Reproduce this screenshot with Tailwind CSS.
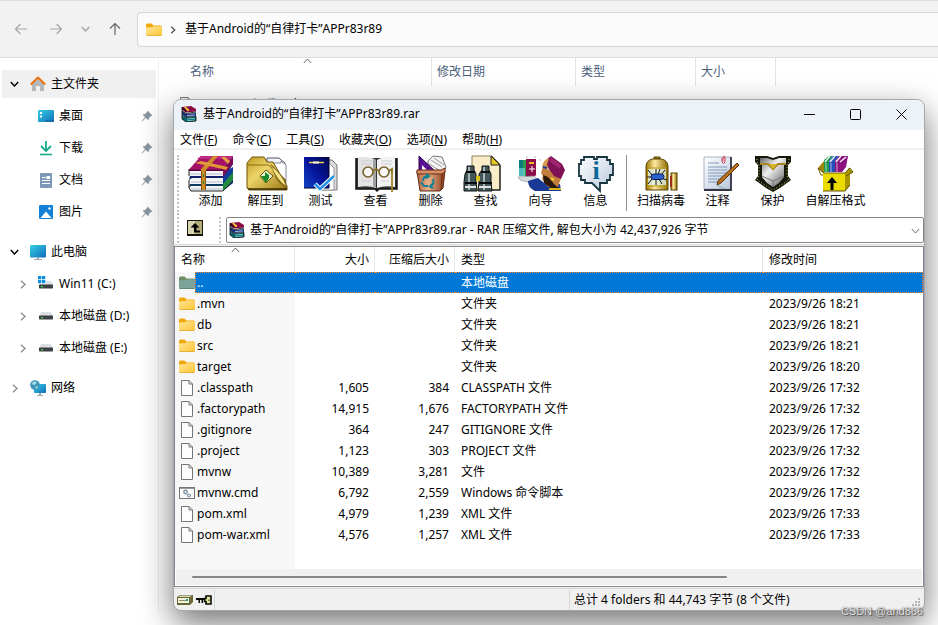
<!doctype html>
<html lang="zh-CN">
	<head>
		<meta charset="UTF-8" />
		<meta name="viewport" content="width=device-width, initial-scale=1.0" />
		<title>基于Android的“自律打卡”APPr83r89.rar</title>
		<script src="https://cdn.jsdelivr.net/npm/@tailwindcss/browser@4"></script>
	</head>
	<body
		class="relative min-h-screen overflow-hidden bg-white text-black text-xs leading-4 font-['Noto_Sans','Noto_Sans_CJK_SC',sans-serif]"
	>
		<!-- Shared icons (zero-sized rather than hidden, so the gradients still resolve) -->
		<svg class="absolute h-0 w-0" aria-hidden="true">
			<defs>
				<linearGradient id="gFolder" x1="0" y1="0" x2="1" y2="1">
					<stop offset="0" stop-color="#ffe596" /><stop offset="1" stop-color="#fdc536" />
				</linearGradient>
				<linearGradient id="gBlue" x1="0" y1="0" x2="1" y2="1">
					<stop offset="0" stop-color="#35d0e0" /><stop offset="1" stop-color="#0f6cbd" />
				</linearGradient>
				<linearGradient id="gGold" x1="0" y1="0" x2="1" y2="0">
					<stop offset="0" stop-color="#9a7400" /><stop offset=".4" stop-color="#ffe9a0" /><stop offset="1" stop-color="#8a6a00" />
				</linearGradient>
				<linearGradient id="gGoldD" x1="0" y1="0" x2="1" y2="1">
					<stop offset="0" stop-color="#c09a22" /><stop offset=".4" stop-color="#ecd56a" /><stop offset="1" stop-color="#9a7614" />
				</linearGradient>
				<linearGradient id="gNavy" x1="0" y1="1" x2="1" y2="0">
					<stop offset="0" stop-color="#1246c8" /><stop offset=".5" stop-color="#06149a" /><stop offset="1" stop-color="#02084e" />
				</linearGradient>
				<linearGradient id="gSteel" x1="0" y1="0" x2="1" y2="1">
					<stop offset="0" stop-color="#666" /><stop offset=".4" stop-color="#f0f0f0" /><stop offset="1" stop-color="#555" />
				</linearGradient>
				<linearGradient id="gPage" x1="0" y1="0" x2="1" y2="1">
					<stop offset="0" stop-color="#ffffff" /><stop offset="1" stop-color="#b9c8dc" />
				</linearGradient>
				<linearGradient id="gBin" x1="0" y1="0" x2="1" y2="0">
					<stop offset="0" stop-color="#b5623a" /><stop offset=".4" stop-color="#e9b08c" /><stop offset="1" stop-color="#8c3f1c" />
				</linearGradient>
			</defs>
			<symbol id="folder" viewBox="0 0 16 13">
				<path d="M0 2Q0 .5 1.500 .5H5.500L7.500 2.500H14.500Q16 2.500 16 4V7H0Z" fill="#f2a70a" />
				<path d="M0 5Q0 4.200 1 4.200H6L7.500 3.200H15Q16 3.200 16 4.200V11.500Q16 12.800 14.700 12.800H1.300Q0 12.800 0 11.500Z" fill="url(#gFolder)" />
				<path d="M.5 12.500H15.500" stroke="#e9b23c" />
			</symbol>
			<symbol id="folderSel" viewBox="0 0 16 13">
				<path d="M0 2Q0 .5 1.500 .5H5.500L7.500 2.500H14.500Q16 2.500 16 4V7H0Z" fill="#6d8f62" />
				<path d="M0 5Q0 4.200 1 4.200H6L7.500 3.200H15Q16 3.200 16 4.200V11.500Q16 12.800 14.700 12.800H1.300Q0 12.800 0 11.500Z" fill="#7da39b" />
				<path d="M.5 12.500H15.500" stroke="#5f8a6e" />
			</symbol>
			<symbol id="file" viewBox="0 0 12 16">
				<path d="M.5 .5H8L11.500 4V15.500H.5Z" fill="#fdfdfd" stroke="#757575" />
				<path d="M8 .5V4H11.500" fill="none" stroke="#757575" />
			</symbol>
			<symbol id="cmd" viewBox="0 0 16 12">
				<rect x=".5" y=".5" width="15" height="11" fill="#fafafa" stroke="#757575" />
				<path d="M1 1.500H15" stroke="#9a9a9a" />
				<circle cx="6.500" cy="5" r="1.700" fill="none" stroke="#8194a5" stroke-width="1.400" />
				<circle cx="10" cy="8.500" r="1.500" fill="none" stroke="#8194a5" stroke-width="1.200" />
			</symbol>
			<symbol id="pin" viewBox="0 0 12 12">
				<path d="M6.500 .5 11.500 5.500 10 6 8 8 7.500 10.500 4.800 7.900 1 11.500 .5 11 4.100 7.200 1.500 4.500 4 4 6 2Z" fill="#8b979f" />
			</symbol>
			<symbol id="drive" viewBox="0 0 16 8">
				<path d="M3 0H13L15 4H1Z" fill="#dcdfe3" />
				<rect x="1" y="3.500" width="14" height="4" rx=".7" fill="#3c4043" />
				<rect x="3" y="5" width="2" height="1.300" fill="#3cd65c" />
			</symbol>
			<symbol id="books" viewBox="0 0 16 16">
				<path d="M1 1 10 0 15 3V5.500L5 6.500 1 3.500Z" fill="#8d0a45" />
				<path d="M1 1 5 4V6.500L1 3.500Z" fill="#3d0020" />
				<path d="M6 7.300 15 6.500" stroke="#eee" />
				<path d="M1 5 5 8 15 7V10L5 11 1 8.500Z" fill="#17327c" />
				<path d="M6 9.600 14 8.900" stroke="#c8d4f0" stroke-width=".8" />
				<path d="M1 9.500 5 11.800 15 10.800V15L5 16 1 13Z" fill="#07646c" />
				<path d="M6 13 14 12.200M6 14.800 14 14" stroke="#7fe0d8" stroke-width=".8" />
				<path d="M3 1H5L8 3.500V5H6.500Z" fill="#f0d030" />
				<path d="M1 1V13L5 16 15 15V10.500L5 11.500 1 8.800M1 5 5 7.500 15 6" fill="none" stroke="#0a0a0a" stroke-width=".8" />
			</symbol>
			<symbol id="chevR" viewBox="0 0 6 9">
				<path d="M1 .8 5 4.500 1 8.200" fill="none" stroke="currentColor" stroke-width="1.300" />
			</symbol>
			<symbol id="chevD" viewBox="0 0 9 6">
				<path d="M.8 1 4.500 5 8.200 1" fill="none" stroke="currentColor" stroke-width="1.400" />
			</symbol>
			<symbol id="chevThin" viewBox="0 0 9 6">
				<path d="M.8 1 4.500 5 8.200 1" fill="none" stroke="currentColor" />
			</symbol>
		</svg>

		<!-- Explorer toolbar -->
		<header
			class="flex h-[58px] items-center border-y border-[#dedede] bg-[#f2f2f2] pl-3.5"
		>
			<button class="flex w-[35px]" aria-label="后退">
				<svg class="h-3 w-3.5" viewBox="0 0 14 12" fill="none" stroke="#a5a5a5" stroke-width="1.200"><path d="M6.500 1 1.500 6 6.500 11M1.500 6H13" /></svg>
			</button>
			<button class="flex w-[32px]" aria-label="前进">
				<svg class="h-3 w-3.5" viewBox="0 0 14 12" fill="none" stroke="#a5a5a5" stroke-width="1.200"><path d="M7.500 1 12.500 6 7.500 11M12.500 6H1" /></svg>
			</button>
			<button class="flex w-[28px] text-[#a5a5a5]" aria-label="最近">
				<svg class="h-1.5 w-[9px]"><use href="#chevD" /></svg>
			</button>
			<button class="flex w-[28px]" aria-label="向上">
				<svg class="h-3.5 w-3" viewBox="0 0 12 14" fill="none" stroke="#666" stroke-width="1.200"><path d="M1 6.500 6 1.500 11 6.500M6 1.500V13" /></svg>
			</button>
			<nav
				class="flex h-[35px] flex-1 items-center rounded-l border border-r-0 border-[#d6d6d6] bg-[#fbfbfb] pl-2"
			>
				<svg class="mr-2 h-[13px] w-4"><use href="#folder" /></svg>
				<svg class="mt-0.5 mr-[9px] h-2 w-1.5 text-[#444]"><use href="#chevR" /></svg>
				<a href="#">基于Android的“自律打卡”APPr83r89</a>
			</nav>
		</header>

		<div class="flex">
			<!-- Navigation pane -->
			<aside class="w-[159px] shrink-0 border-r border-[#f0f0f0] pt-2.5 pb-52">
				<ul>
					<li class="mx-0.5 my-0.5 flex h-7 items-center bg-[#f0f0f0] pl-2">
						<svg class="h-1.5 w-[9px]"><use href="#chevD" /></svg>
						<svg class="mr-[5px] ml-[11px] h-4 w-4" viewBox="0 0 16 16">
							<path d="M2 8 8 3 14 8V15H10V10H6V15H2Z" fill="#b5b8bb" />
							<path d="M.8 8.500 8 1.500 15.200 8.500" fill="none" stroke="#e8730c" stroke-width="2" stroke-linejoin="round" />
						</svg>
						<span>主文件夹</span>
					</li>
					<li class="flex h-8 items-center pr-[5px] pl-[38px]">
						<svg class="mr-[5px] h-4 w-4" viewBox="0 0 16 16">
							<rect y="2" width="16" height="12" rx="1" fill="url(#gBlue)" />
							<path d="M2 4H4V6H2ZM2 7.500H4V9.500H2Z" fill="#fff" />
							<path d="M8 13H16" stroke="#0a4f94" stroke-dasharray="2 1" />
						</svg>
						<span class="flex-1">桌面</span>
						<svg class="h-3 w-3"><use href="#pin" /></svg>
					</li>
					<li class="flex h-8 items-center pr-[5px] pl-[38px]">
						<svg class="mr-[5px] h-4 w-4" viewBox="0 0 16 16">
							<path d="M8 1V10.500M3 6 8 11 13 6" fill="none" stroke="#17a98c" stroke-width="1.800" />
							<path d="M2 14.500H14" stroke="#17a98c" stroke-width="1.600" />
						</svg>
						<span class="flex-1">下载</span>
						<svg class="h-3 w-3"><use href="#pin" /></svg>
					</li>
					<li class="flex h-8 items-center pr-[5px] pl-[38px]">
						<svg class="mr-[5px] h-4 w-4" viewBox="0 0 16 16">
							<rect x="2" y="1" width="12" height="15" rx="1" fill="#7e98b8" />
							<path d="M4 5.500H7.500M4 8.500H12M4 11.500H12" stroke="#fff" stroke-width="1.200" />
							<rect x="8.500" y="4" width="3.500" height="3" fill="#fff" />
						</svg>
						<span class="flex-1">文档</span>
						<svg class="h-3 w-3"><use href="#pin" /></svg>
					</li>
					<li class="flex h-8 items-center pr-[5px] pl-[38px]">
						<svg class="mr-[5px] h-4 w-4" viewBox="0 0 16 16">
							<rect x="1" y="1" width="14" height="14" rx="1" fill="#1481d6" />
							<path d="M2.500 14 8 7.500 13.500 14Z" fill="#fff" />
							<circle cx="11.500" cy="4.500" r="1.200" fill="#fff" />
						</svg>
						<span class="flex-1">图片</span>
						<svg class="h-3 w-3"><use href="#pin" /></svg>
					</li>
					<li class="mt-2 flex h-8 items-center pl-2.5">
						<svg class="h-1.5 w-[9px]"><use href="#chevD" /></svg>
						<svg class="mr-[5px] ml-[11px] h-4 w-4" viewBox="0 0 16 16">
							<rect y="1" width="16" height="12.500" rx="1" fill="url(#gBlue)" />
							<path d="M7 13H9V15H12V16H4V15H7Z" fill="#9aa5ad" />
						</svg>
						<span>此电脑</span>
					</li>
					<li class="flex h-8 items-center pl-5">
						<svg class="h-[9px] w-1.5 text-[#888]"><use href="#chevR" /></svg>
						<svg class="mr-[5px] ml-3 h-4 w-4" viewBox="0 0 16 16">
							<path d="M0 0H3.300V3.300H0ZM4 0H7.300V3.300H4ZM0 4H3.300V7.300H0ZM4 4H7.300V7.300H4Z" fill="#0a8fe0" />
							<path d="M8 5H13L15 9H1L2 8H8Z" fill="#dcdfe3" />
							<rect x="1" y="8.500" width="14" height="4" rx=".7" fill="#3c4043" />
							<rect x="3" y="10" width="2" height="1.300" fill="#3cd65c" />
						</svg>
						<span>Win11 (C:)</span>
					</li>
					<li class="flex h-8 items-center pl-5">
						<svg class="h-[9px] w-1.5 text-[#888]"><use href="#chevR" /></svg>
						<svg class="mr-[5px] ml-3 h-2 w-4"><use href="#drive" /></svg>
						<span>本地磁盘 (D:)</span>
					</li>
					<li class="flex h-8 items-center pl-5">
						<svg class="h-[9px] w-1.5 text-[#888]"><use href="#chevR" /></svg>
						<svg class="mr-[5px] ml-3 h-2 w-4"><use href="#drive" /></svg>
						<span>本地磁盘 (E:)</span>
					</li>
					<li class="mt-2 flex h-8 items-center pl-3">
						<svg class="h-[9px] w-1.5 text-[#888]"><use href="#chevR" /></svg>
						<svg class="mr-[5px] ml-3 h-4 w-4" viewBox="0 0 16 16">
							<rect x="4" y="4" width="12" height="9" rx="1" fill="url(#gBlue)" />
							<path d="M9 13H11V15H13V16H7V15H9Z" fill="#9aa5ad" />
							<circle cx="5" cy="5" r="4.800" fill="#3f95bb" />
							<path d="M2 3Q4 .5 7 2L5 5 2.500 4.500ZM5 7 8 6 7 9Z" fill="#a9dcea" />
						</svg>
						<span>网络</span>
					</li>
				</ul>
			</aside>

			<!-- File list behind the archive window -->
			<main class="min-w-0 flex-1">
				<div class="relative flex h-7 items-center pl-[21px] text-[#4c607a]">
					<svg class="absolute top-0 left-36 h-1.5 w-[9px] rotate-180 text-[#666]"><use href="#chevThin" /></svg>
					<span class="flex h-full w-[252px] items-center border-r border-[#e2e2e2] pl-2.5">名称</span>
					<span class="flex h-full w-36 items-center border-r border-[#e2e2e2] pl-[5px]">修改日期</span>
					<span class="flex h-full w-[120px] items-center border-r border-[#e2e2e2] pl-[5px]">类型</span>
					<span class="flex h-full w-20 items-center border-r border-[#e2e2e2] pl-[5px]">大小</span>
				</div>
				<div class="flex h-8 items-center pt-1.5 pl-[21px]">
					<svg class="mr-[13px] h-4 w-3"><use href="#file" /></svg>
					<span>Android 源代码库</span>
				</div>
			</main>
		</div>

		<!-- WinRAR window -->
		<section
			class="absolute top-[99px] right-[13px] left-[173px] overflow-hidden rounded-lg border border-[#a3a6aa] bg-[#f0f0f0] shadow-[0_12px_32px_rgba(0,0,0,0.55)]"
		>
			<div class="flex h-[30px] items-center bg-[#edf2f9] pb-0.5 pl-[7px]">
				<svg class="mr-1.5 h-4 w-4"><use href="#books" /></svg>
				<h1 class="flex-1">基于Android的“自律打卡”APPr83r89.rar</h1>
				<button class="flex w-[46px] justify-center" aria-label="最小化">
					<svg class="h-[11px] w-[11px]" viewBox="0 0 11 11" fill="none" stroke="#000"><path d="M0 5.500H11" /></svg>
				</button>
				<button class="flex w-[46px] justify-center" aria-label="最大化">
					<svg class="h-[11px] w-[11px]" viewBox="0 0 11 11" fill="none" stroke="#000"><rect x=".5" y=".5" width="10" height="10" rx="1" /></svg>
				</button>
				<button class="flex w-[46px] justify-center" aria-label="关闭">
					<svg class="h-[11px] w-[11px]" viewBox="0 0 11 11" fill="none" stroke="#000"><path d="M.5 .5 10.500 10.500M10.500 .5 .5 10.500" /></svg>
				</button>
			</div>

			<div class="flex h-5 gap-[15px] border-b-2 border-[#f0f0f0] bg-white pt-0.5 pl-1.5">
				<button>文件(<u>F</u>)</button>
				<button>命令(<u>C</u>)</button>
				<button>工具(<u>S</u>)</button>
				<button>收藏夹(<u>O</u>)</button>
				<button>选项(<u>N</u>)</button>
				<button>帮助(<u>H</u>)</button>
			</div>

			<!-- Toolbar -->
			<div class="flex h-[65px] bg-white pt-[5px] pl-[3px]">
				<div class="mr-1 w-0.5 border-l-2 border-dotted border-[#c4c4c4]"></div>
				<button class="flex w-[55px] flex-col items-center">
					<svg class="h-[38px] w-[46px]" viewBox="0 0 46 38">
						<path d="M35 14 45 2V9L42 14 45 12V19L42 25 45 22V28L35 36Z" fill="#123c9c" />
						<path d="M35 14 45 1V9L35 22Z" fill="#7d0a54" />
						<path d="M35 29 45 17V25L35 36Z" fill="#1e8c3c" />
						<path d="M1 14H35V36H3L1 33Z" fill="#f4f4f4" />
						<path d="M1 14H35V16H1Z" fill="#5b053b" />
						<path d="M2 21H35V23H4L1 25Z" fill="#14216c" />
						<path d="M2 29H35V31H3L1 33Z" fill="#0e3c5c" />
						<path d="M2 19H35M3 27H35M3 34H35" stroke="#b8c0cc" />
						<path d="M13 1H45L35 14.500H1Z" fill="#a31268" />
						<path d="M13 1H45L43 4H9Z" fill="#bd2c80" />
						<path d="M25 1H30L18 15V35H13V14Z" fill="#cf8b26" />
						<path d="M7 8 13 6 40 12 38 15 35 14Z" fill="#e09a33" />
						<path d="M33 2H37L42 6 40 9Z" fill="#e5a440" />
						<path d="M13.500 16V35M17.500 16V35" stroke="#8d5410" />
						<path d="M15 19H16V22H15ZM15 26H16V29H15Z" fill="#1f8d30" />
						<path d="M1 14V21M1 25V33L3 36H35L45 26" fill="none" stroke="#222" />
					</svg>
					<span>添加</span>
				</button>
				<button class="flex w-[55px] flex-col items-center">
					<svg class="h-[38px] w-[46px]" viewBox="0 0 46 38">
						<path d="M24 3H36L42 8V30H24Z" fill="#eef3fa" stroke="#556" />
						<path d="M28 8H38V6L43 10V31" fill="#fff" stroke="#889" />
						<path d="M4 8 9 2H21L24 7H30L44 31V35H6L4 33Z" fill="url(#gGoldD)" stroke="#6c5208" />
						<path d="M5 10H26Q31 14 32 20T43 33V35" fill="none" stroke="#8c6c10" />
						<path d="M27 8 43 25V32Q33 26 31 16Z" fill="#7b6013" />
						<path d="M29 12Q38 18 43 31Q34 25 29 12" fill="#f6e48c" />
						<path d="M17 21 23 15 30 21 23 28Z" fill="#e9f5d8" stroke="#6c5208" />
						<path d="M18 21H22V17L26 20V23L23 28Z" fill="#198a28" />
						<path d="M5 34H44" stroke="#3c2e02" stroke-width="1.500" />
					</svg>
					<span>解压到</span>
				</button>
				<button class="flex w-[55px] flex-col items-center">
					<svg class="h-[38px] w-[46px]" viewBox="0 0 46 38">
						<path d="M26 5H34L39 10V35H22Z" fill="#d9d9dd" stroke="#777" />
						<path d="M24 8H31L36 13V35H22Z" fill="#fff" stroke="#999" />
						<rect x="6" y="2" width="25" height="31" fill="url(#gNavy)" />
						<path d="M31 2V33M6 33H31" stroke="#01042e" />
						<path d="M11 7.500H26" stroke="#e6d354" stroke-width="1.600" /><path d="M15 7.500H21" stroke="#fffad0" stroke-width="2" />
						<path d="M17 29 22 34 36 21" fill="none" stroke="#fff" stroke-width="4.500" />
						<path d="M17 29 22 34 36 21" fill="none" stroke="#2492e6" stroke-width="2.500" />
					</svg>
					<span>测试</span>
				</button>
				<button class="flex w-[55px] flex-col items-center">
					<svg class="h-[38px] w-[46px]" viewBox="0 0 46 38">
						<path d="M3 3V34H22L24 36 26 34H44V3" fill="#333" stroke="#111" stroke-width="1.500" />
						<path d="M5 2Q16 1 23 5V33Q15 30 5 32Z" fill="#e4e4e4" />
						<path d="M42 2Q31 1 24 5V33Q32 30 42 32Z" fill="#f2f2f2" />
						<path d="M20 4 23 5V33L20 31.500Z" fill="#a2a2a2" />
						<path d="M8 6H19M8 9H19M28 6H39M28 9H39M9 26H18M28 26H36" stroke="#cdcdcd" />
						<circle cx="15" cy="17" r="5" fill="#f8f8f8" stroke="#75622a" stroke-width="1.600" />
						<circle cx="31" cy="17" r="5" fill="#f8f8f8" stroke="#75622a" stroke-width="1.600" />
						<path d="M20 16Q23 13 26 16M36 16 39 14V37" fill="none" stroke="#8d7420" stroke-width="1.800" />
						<path d="M39 20V36" stroke="#e4c44c" stroke-dasharray="1 1.500" />
					</svg>
					<span>查看</span>
				</button>
				<button class="flex w-[55px] flex-col items-center">
					<svg class="h-[38px] w-[46px]" viewBox="0 0 46 38">
						<path d="M20 6 25 1 34 2 38 12 36 17H20Z" fill="#f3f3f3" stroke="#777" />
						<path d="M23 5 34 12M26 3 36 10M21 9 31 15" stroke="#999" />
						<path d="M11 1 28 17H11Z" fill="#5a1096" stroke="#2a044c" />
						<path d="M14 10 19 15H14Z" fill="#fff" />
						<path d="M9 16H37L35 33 32 36H12Z" fill="url(#gBin)" stroke="#5c2710" />
						<path d="M9 15H33L37 13V17L34 19H9Z" fill="#d68e66" stroke="#6c2d12" />
						<path d="M34 19 33 35" stroke="#6c2d12" />
						<path d="M15 26Q15 21 20 21M18 19 21 21 18 23.500M25 24Q27 29 22 31M25 29 22 31.500 25 33M13 27 16 31 20 31" fill="none" stroke="#0f7f94" stroke-width="2" />
					</svg>
					<span>删除</span>
				</button>
				<button class="flex w-[55px] flex-col items-center">
					<svg class="h-[38px] w-[46px]" viewBox="0 0 46 38">
						<path d="M9 1H29L37 9V35H9Z" fill="#f8edc8" stroke="#8f8054" />
						<path d="M28 1 37 10H28Z" fill="#e5c621" stroke="#222" />
						<path d="M37 10V35H29" fill="none" stroke="#333" stroke-width="1.500" />
						<path d="M4 11H11V15L13 19V27L14 36H1V27L2 19 4 15Z" fill="#43565a" stroke="#101414" />
						<path d="M19 11H26V15L28 19V27L29 36H15L16 27V19L19 15Z" fill="#43565a" stroke="#101414" />
						<path d="M6 12V35M21 12V35" stroke="#a4b8b8" stroke-width="2" />
						<path d="M2 28H14M16 28H29M3 17H12M18 17H27" stroke="#0b0e0e" stroke-width="1.800" />
						<path d="M2 32H13M16 32H28" stroke="#e4e4e4" stroke-width="2" />
						<path d="M13 21H17V26H13Z" fill="#d8c21c" />
					</svg>
					<span>查找</span>
				</button>
				<button class="flex w-[55px] flex-col items-center">
					<svg class="h-[38px] w-[46px] overflow-visible" viewBox="0 0 46 38">
						<path d="M1 5H5V21H1Z" fill="#0c7b80" /><path d="M5 5H8V21H5Z" fill="#2e9c4c" />
						<path d="M8 4H18V20L16 22H8Z" fill="#8b0d4c" /><path d="M11 8H16" stroke="#e6c21c" stroke-width="2" />
						<path d="M1 13H7V21H1Z" fill="#7ce0e8" opacity=".6" />
						<path d="M0 22 16 21 19 24 10 27 2 25Z" fill="#d5dade" stroke="#888" stroke-width=".6" />
						<path d="M10 26 20 23 30 31 42 29 43 36H17Q10 33 10 26" fill="#183a96" />
						<path d="M25 11 34 17 43 23 40 32H30L24 24 25 21 23 18Z" fill="#c07d3c" />
						<path d="M25 20 30 22 37 30 41 33 33 33 26 28Z" fill="#2a190c" />
						<path d="M33 1 44 9 47 15 43 24 36 21 27 9 29 4Z" fill="#7e1254" />
						<path d="M33 2 43 10 42 14 31 6Z" fill="#a02470" />
						<path d="M24 12Q25 5 31 3L29 10 31 14Z" fill="#d89a4c" />
						<path d="M25 12 29 13" stroke="#1c3ca0" stroke-width="2" />
						<path d="M33 23 36 25" stroke="#ffd83a" stroke-width="2" />
						<path d="M31 34H43" stroke="#d8b420" stroke-width="2" />
						<path d="M14 11V17M11 14H17" stroke="#fff" />
						<path d="M9 1V3M17 1V3M22 4V6" stroke="#bbb" />
					</svg>
					<span>向导</span>
				</button>
				<button class="flex w-[55px] flex-col items-center">
					<svg class="h-[38px] w-[46px]" viewBox="0 0 46 38">
						<path d="M11 2H21V4H24V2H34V5H37V9H40V20H37V25H34V28H27V36L19 28H12V25H8V21H6V9H8V5H11Z" fill="url(#gPage)" stroke="#183640" stroke-width="1.800" />
						<text x="23" y="24" text-anchor="middle" fill="#106898" font-family="Liberation Serif" font-size="26" font-weight="bold">i</text>
					</svg>
					<span>信息</span>
				</button>
				<div class="mr-1.5 ml-[3px] h-14 border-l border-[#8c8c8c]"></div>
				<button class="flex w-14 flex-col items-center">
					<svg class="h-[38px] w-[46px]" viewBox="0 0 46 38">
						<path d="M16 2H22V4H16Z" fill="#a88410" stroke="#5a4400" />
						<path d="M8 12Q8 5 15 4H23Q30 5 30 12V35H8Z" fill="url(#gGold)" stroke="#5a4400" />
						<path d="M10 14H28V30H10Z" fill="#e0f4f2" opacity=".75" />
						<path d="M9 13H29M9 31H29" stroke="#b99718" />
						<path d="M10 15 14 20M9 22H14M10 29 14 24M18 14V30M22 14 20 20M27 15 23 20M29 25 23 23M24 29 21 24" stroke="#111" />
						<rect x="13" y="19" width="13" height="5.500" rx="2.700" fill="#2b62d0" stroke="#0a1c50" />
						<rect x="33" y="18" width="6" height="17" fill="url(#gGold)" stroke="#5a4400" />
						<path d="M33 21V32" stroke="#9c2c18" stroke-width="2" />
					</svg>
					<span>扫描病毒</span>
				</button>
				<button class="flex w-[57px] flex-col items-center">
					<svg class="h-[38px] w-[46px]" viewBox="0 0 46 38">
						<path d="M9 2H36V34H9Z" fill="url(#gPage)" stroke="#a6b4c6" />
						<path d="M36 2V35H9" fill="none" stroke="#334" stroke-width="1.800" />
						<path d="M13 8H24M13 12H32M13 15H32M13 18H32M13 21H29M13 24H26M13 27H23" stroke="#7c98bc" />
						<path d="M27 3V7Q28.500 10 30 7V2Q28 0 28 3V6" fill="none" stroke="#d43350" />
						<path d="M42 8 44 10 26 28 22 30 23 26Z" fill="#b8701c" stroke="#5a3208" />
						<path d="M22 30 30 34" stroke="#8aa" />
					</svg>
					<span>注释</span>
				</button>
				<button class="flex w-[53px] flex-col items-center">
					<svg class="h-[38px] w-[46px]" viewBox="0 0 46 38">
						<path d="M5 1H17L23 3 29 1H41V7L38 10V21L41 25 30 33 23 37 16 33 5 25 8 21V10L5 7Z" fill="#15170a" />
						<path d="M10 3H17L23 5 29 3H36V8L34 10V22L29 28 23 32 17 28 12 22V10L10 8Z" fill="url(#gSteel)" />
						<path d="M10 9H18L23 14 28 9H36" fill="none" stroke="#a68520" stroke-width="2" />
						<path d="M19 9H27L23 14Z" fill="#d8b62a" />
						<path d="M7 4V7L9 10V21L7 25 23 35 39 25 37 21V10L39 7V4" fill="none" stroke="#c8cc58" stroke-dasharray="1 2" />
						<path d="M12 21 23 26 34 21M23 26V32" fill="none" stroke="#777" />
					</svg>
					<span>保护</span>
				</button>
				<button class="flex w-[73px] flex-col items-center">
					<svg class="h-[38px] w-[46px]" viewBox="0 0 46 38">
						<path d="M5 13 11 6V18H32L41 6 36 13 40 17 33 22H10V18Z" fill="#9c8608" />
						<path d="M11 5 16 1H20L16 6V17H11Z" fill="#1c9a4c" />
						<path d="M16 6 20 1H26L22 6V17H16Z" fill="#2550bc" />
						<path d="M22 6 26 1H35L33 12 29 17H22Z" fill="#8c1280" />
						<path d="M12 7 17 1M17 7 22 1M23 7 28 1M27 7 33 2" stroke="#f0f0f0" stroke-width="1.400" />
						<path d="M13 8V17M18 8V17M24 8V17" stroke="#fff" opacity=".6" />
						<path d="M10 18H32V36H10Z" fill="#eadb00" />
						<path d="M32 18 37 13V30L32 36Z" fill="#a99600" />
						<path d="M5 13 11 18H32L37 13 40 17 33 21M5 13 8 20H10" fill="none" stroke="#6c5d00" />
						<path d="M10 36H32L37 30" fill="none" stroke="#5c5000" />
						<path d="M14 28 19 22 24 28H20.500V35H17.500V28Z" fill="#000" />
					</svg>
					<span>自解压格式</span>
				</button>
			</div>

			<!-- Address row -->
			<div class="flex h-[30px] border-b border-[#d9d9d9] bg-white pt-0.5 pb-px pl-[3px]">
				<div class="mr-2 w-0.5 border-l-2 border-dotted border-[#c4c4c4]"></div>
				<button class="mt-[3px] mr-4 h-4" aria-label="向上">
					<svg class="h-4 w-4" viewBox="0 0 16 16">
						<rect width="16" height="16" fill="#17150a" />
						<rect x="1" y="1" width="14" height="13" fill="#b4ac7a" />
						<rect x="1" y="1" width="7" height="13" fill="#d8d3b0" />
						<path d="M3.500 7.500 8 3 12.500 7.500H9.500V10.500H13V12.500H7V7.500Z" fill="#000" />
					</svg>
				</button>
				<div class="mr-[5px] w-0.5 border-l-2 border-dotted border-[#c4c4c4]"></div>
				<div class="relative flex flex-1">
					<svg class="absolute top-[5px] left-[3px] h-4 w-4"><use href="#books" /></svg>
					<select
						aria-label="地址"
						class="w-full appearance-none rounded-xs border border-[#868686] bg-transparent pl-[23px] text-xs"
					>
						<option>基于Android的“自律打卡”APPr83r89.rar - RAR 压缩文件, 解包大小为 42,437,926 字节</option>
					</select>
					<svg class="pointer-events-none absolute top-[11px] right-1 h-1.5 w-[9px] text-[#666]"><use href="#chevThin" /></svg>
				</div>
			</div>

			<!-- Archive contents -->
			<div class="mt-px border border-[#828790] bg-white">
				<table class="w-full table-fixed border-separate border-spacing-0">
					<colgroup>
						<col class="w-[120px]" />
						<col class="w-20" />
						<col class="w-20" />
						<col class="w-[308px]" />
						<col />
					</colgroup>
					<thead>
						<tr class="h-[25px] text-left">
							<th class="relative border-r border-[#e5e5e5] p-0 pl-1.5 font-normal">
								名称
								<svg class="absolute top-0 left-14 h-1.5 w-[9px] rotate-180 text-[#666]"><use href="#chevThin" /></svg>
							</th>
							<th class="border-r border-[#e5e5e5] p-0 pr-[5px] text-right font-normal">大小</th>
							<th class="border-r border-[#e5e5e5] p-0 pr-[5px] text-right font-normal">压缩后大小</th>
							<th class="border-r border-[#e5e5e5] p-0 pl-1.5 font-normal">类型</th>
							<th class="p-0 pl-1.5 font-normal">修改时间</th>
						</tr>
					</thead>
					<tbody
						id="fileRows"
						class="[&_td]:p-0 [&_td:first-child]:bg-[#f7f7f7] [&_td:nth-child(2)]:pr-1.5 [&_td:nth-child(2)]:text-right [&_td:nth-child(3)]:pr-1.5 [&_td:nth-child(3)]:text-right [&_td:nth-child(4)]:pl-1.5 [&_td:nth-child(5)]:pl-1.5"
					>
						<tr class="h-[21px] text-white">
							<td>
								<div class="flex h-[21px] items-center pl-1">
									<svg class="h-[13px] w-4"><use href="#folderSel" /></svg>
									<span class="flex h-full flex-1 items-center border-y border-l border-dotted border-[#ff8728] bg-[#0078d7] pl-px">..</span>
								</div>
							</td>
							<td class="border-y border-dotted border-[#ff8728] bg-[#0078d7]"></td>
							<td class="border-y border-dotted border-[#ff8728] bg-[#0078d7]"></td>
							<td class="border-y border-dotted border-[#ff8728] bg-[#0078d7]">本地磁盘</td>
							<td class="border-y border-r border-dotted border-[#ff8728] bg-[#0078d7]"></td>
						</tr>
					</tbody>
				</table>
				<!-- Horizontal scrollbar -->
				<div class="mx-px mb-px flex h-4 items-center bg-[#f0f0f0] pr-[195px] pl-4">
					<div class="h-0.5 flex-1 rounded bg-[#868686]"></div>
				</div>
			</div>

			<!-- Status bar -->
			<footer class="relative mt-px flex h-[22px] items-center border-t border-[#d7d7d7]">
				<div class="flex h-5 w-[41px] items-center gap-[3px] border-r border-[#d7d7d7] pl-[3px]">
					<svg class="h-3 w-4" viewBox="0 0 16 12">
						<path d="M0 3 3 1H16V8L13 11H0Z" fill="#6a6838" />
						<path d="M1 3H13L15 1.500H3.500Z" fill="#d9d8b0" />
						<rect x="1" y="4" width="11" height="5" fill="#f1f1dc" />
						<path d="M2 6.500H11" stroke="#8c8c60" /><rect x="9" y="5" width="2" height="2" fill="#1c9c7c" />
					</svg>
					<svg class="h-2.5 w-4" viewBox="0 0 16 10">
						<path d="M0 3H9V5H7V8H5.500V5H4V8H2.500V5H0Z" fill="#0a0a04" />
						<path d="M10 1H15V9H10V6.500H8.500V3.500H10Z" fill="#e8e4a0" stroke="#0a0a04" stroke-width="1.600" />
						<path d="M13 4.500V6" stroke="#0a0a04" />
					</svg>
				</div>
				<div class="ml-[354px] flex h-5 flex-1 items-center border-l border-[#d7d7d7] pl-1">
					总计 4 folders 和 44,743 字节 (8 个文件)
				</div>
				<svg class="absolute right-1 bottom-1 h-2 w-2" viewBox="0 0 8 8">
					<path d="M6 0H8V2H6ZM3 3H5V5H3ZM6 3H8V5H6ZM0 6H2V8H0ZM3 6H5V8H3ZM6 6H8V8H6Z" fill="#b4b4b4" />
				</svg>
			</footer>
		</section>

		<p
			class="absolute top-[603px] right-[15px] text-[11px] text-[#e6e6e6] [text-shadow:0_0_1px_#555,1px_1px_1px_#555] font-['Liberation_Sans',sans-serif]"
		>
			CSDN @and866
		</p>

		<script>
			// icon, name, size, packed size, type, modified
			const files = [
				["folder", ".mvn", "", "", "文件夹", "2023/9/26 18:21"],
				["folder", "db", "", "", "文件夹", "2023/9/26 18:21"],
				["folder", "src", "", "", "文件夹", "2023/9/26 18:21"],
				["folder", "target", "", "", "文件夹", "2023/9/26 18:20"],
				["file", ".classpath", "1,605", "384", "CLASSPATH 文件", "2023/9/26 17:32"],
				["file", ".factorypath", "14,915", "1,676", "FACTORYPATH 文件", "2023/9/26 17:32"],
				["file", ".gitignore", "364", "247", "GITIGNORE 文件", "2023/9/26 17:32"],
				["file", ".project", "1,123", "303", "PROJECT 文件", "2023/9/26 17:32"],
				["file", "mvnw", "10,389", "3,281", "文件", "2023/9/26 17:32"],
				["cmd", "mvnw.cmd", "6,792", "2,559", "Windows 命令脚本", "2023/9/26 17:32"],
				["file", "pom.xml", "4,979", "1,239", "XML 文件", "2023/9/26 17:33"],
				["file", "pom-war.xml", "4,576", "1,257", "XML 文件", "2023/9/26 17:33"],
			];
			const iconClass = {
				folder: "mr-0.5 h-[13px] w-4",
				file: "mr-1 ml-0.5 h-4 w-3",
				cmd: "mr-0.5 h-3 w-4",
			};
			const rows = files.map(
				([icon, name, ...rest]) => `<tr class="h-[21px]">
					<td><div class="flex items-center pl-1"><svg class="${iconClass[icon]}"><use href="#${icon}" /></svg>${name}</div></td>
					${rest.map((text) => `<td>${text}</td>`).join("")}
				</tr>`
			);
			// Filler row keeps the sorted column shaded down to the scrollbar
			rows.push('<tr class="h-6"><td></td><td></td><td></td><td></td><td></td></tr>');
			document.getElementById("fileRows").insertAdjacentHTML("beforeend", rows.join(""));
		</script>
	</body>
</html>
